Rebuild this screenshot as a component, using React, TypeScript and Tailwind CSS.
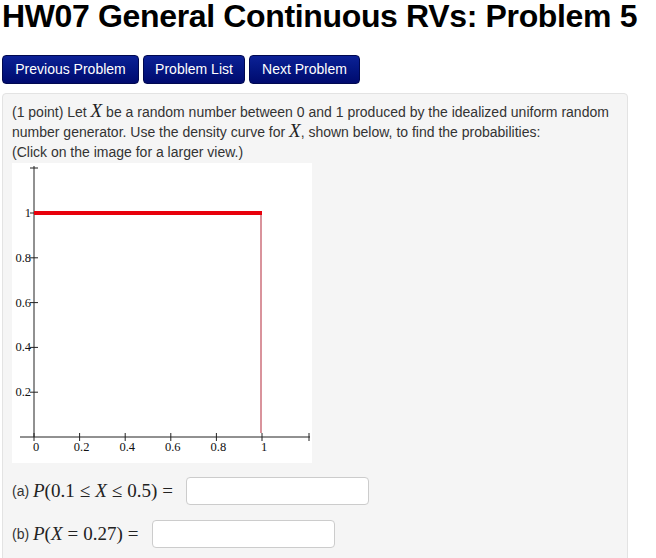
import React from "react";

const serif = { fontFamily: '"Liberation Serif", "DejaVu Serif", serif' };

function M({ children }: { children: React.ReactNode }) {
  return (
    <span className="text-[19px] leading-[0] text-[#222]" style={serif}>
      {children}
    </span>
  );
}

function I({ children }: { children: React.ReactNode }) {
  return <i className="italic">{children}</i>;
}

// relation symbol with MathJax-like thick spacing
function R({ children }: { children: React.ReactNode }) {
  return <span className="mx-[5px]">{children}</span>;
}

function NavButton({ label, w }: { label: string; w: string }) {
  return (
    <button
      className={`${w} h-[29px] rounded-[4px] border border-[#000850] bg-gradient-to-b from-[#0c2196] to-[#000a6e] text-[14px] text-white`}
    >
      {label}
    </button>
  );
}

function Graph() {
  // y-axis at x=22, origin at y=274 (inside 300x300 image)
  const xs = [0, 0.2, 0.4, 0.6, 0.8, 1];
  const ys = [0.2, 0.4, 0.6, 0.8, 1];
  const px = (v: number) => 22 + v * 228;
  const py = (v: number) => 274 - v * 224;
  return (
    <svg width="300" height="300" viewBox="0 0 300 300" className="block bg-white">
      <line x1="22" y1="3" x2="22" y2="274" stroke="#222" strokeWidth="1" />
      <line x1="8" y1="274" x2="298" y2="274" stroke="#222" strokeWidth="1" />
      <line x1="18" y1="5" x2="26" y2="5" stroke="#222" />
      <line x1="297" y1="270" x2="297" y2="278" stroke="#222" />
      {xs.map((v) => (
        <g key={v}>
          <line x1={px(v)} y1="270" x2={px(v)} y2="278" stroke="#222" />
          <text x={px(v) + 2} y="288" fontSize="12.5" textAnchor="middle" fill="#111" style={serif}>
            {String(v)}
          </text>
        </g>
      ))}
      {ys.map((v) => (
        <g key={v}>
          <line x1="18" y1={py(v)} x2="26" y2={py(v)} stroke="#222" />
          <text x="19" y={py(v) + 4} fontSize="12.5" textAnchor="end" fill="#111" style={serif}>
            {String(v)}
          </text>
        </g>
      ))}
      <line x1="249" y1={py(1) + 1} x2="249" y2="270" stroke="#d9939c" strokeWidth="2" />
      <line x1="22" y1={py(1)} x2="250" y2={py(1)} stroke="#e8000b" strokeWidth="4" />
    </svg>
  );
}

export default function App() {
  return (
    <div
      className="h-screen bg-white text-[#333] overflow-hidden"
      style={{ fontFamily: '"Liberation Sans", Arial, sans-serif' }}
    >
      <h1 className="pl-[2px] pt-[1px] text-[32px] leading-[30px] font-bold text-black tracking-[-0.35px] whitespace-nowrap">
        HW07 General Continuous RVs: Problem 5
      </h1>
      <div className="flex gap-[4px] pl-[2px] mt-[24px]">
        <NavButton label="Previous Problem" w="w-[137px]" />
        <NavButton label="Problem List" w="w-[102px]" />
        <NavButton label="Next Problem" w="w-[111px]" />
      </div>
      <div className="ml-[2px] mt-[9px] w-[626px] h-[500px] rounded-[4px] border border-[#e3e3e3] bg-[#f5f5f5] pl-[9px] pt-[8px] text-[14px] leading-[20px]">
        <p className="pr-[10px]">
          (1 point) Let <M><I>X</I></M> be a random number between 0 and 1 produced by the idealized uniform random
          number generator. Use the density curve for <M><I>X</I></M>, shown below, to find the probabilities:
        </p>
        <p>(Click on the image for a larger view.)</p>
        <div className="mt-[1px]">
          <Graph />
        </div>
        <div className="mt-[14px] flex items-center h-[28px]">
          <span>(a)&nbsp;</span>
          <M>
            <I>P</I>(0.1<R>≤</R><I>X</I><R>≤</R>0.5)<R>=</R>
          </M>
          <input className="ml-[8px] h-[28px] w-[183px] rounded-[4px] border border-[#ccc] bg-white" />
        </div>
        <div className="mt-[15px] flex items-center h-[28px]">
          <span>(b)&nbsp;</span>
          <M>
            <I>P</I>(<I>X</I><R>=</R>0.27)<R>=</R>
          </M>
          <input className="ml-[8px] h-[28px] w-[183px] rounded-[4px] border border-[#ccc] bg-white" />
        </div>
      </div>
    </div>
  );
}
